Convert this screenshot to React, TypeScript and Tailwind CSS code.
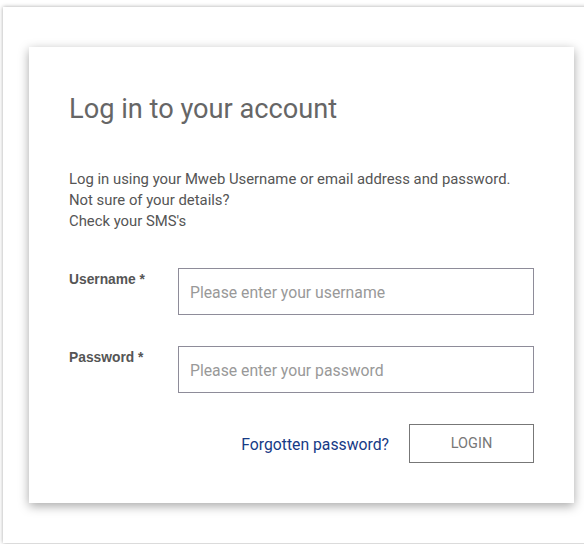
import React from 'react';

export default function App() {
  return (
    <div className="min-h-[544px] w-[584px] overflow-hidden bg-white font-['Roboto',sans-serif]">
      <div className="ml-[3px] mt-[7px] h-[536px] w-[620px] bg-white pl-[26px] pt-[40px] shadow-[0_0_4px_rgba(0,0,0,0.35)]">
        <div className="w-[545px] bg-white px-[40px] pb-[40px] pt-[46px] shadow-[0_3px_10px_rgba(0,0,0,0.35)]">
          <h1 className="text-[27.2px] leading-[32px] text-[#666]">Log in to your account</h1>

          <div className="mt-[44px] text-[14.85px] leading-[21px] text-[#555]">
            <p>Log in using your Mweb Username or email address and password.</p>
            <p>Not sure of your details?</p>
            <p>Check your SMS's</p>
          </div>

          <div className="mt-[36px] flex flex-col gap-[31px]">
            <div className="flex">
              <label className="w-[109px] pt-[2px] font-['Liberation_Sans',sans-serif] text-[13.8px] font-bold text-[#555]">Username *</label>
              <input
                className="h-[47px] w-[356px] border border-[#8e8c99] px-[11px] pt-[2px] text-[15.75px] text-[#555] outline-none placeholder:text-[#999]"
                placeholder="Please enter your username"
              />
            </div>
            <div className="flex">
              <label className="w-[109px] pt-[2px] font-['Liberation_Sans',sans-serif] text-[13.8px] font-bold text-[#555]">Password *</label>
              <input
                type="password"
                className="h-[47px] w-[356px] border border-[#8e8c99] px-[11px] pt-[2px] text-[15.75px] text-[#555] outline-none placeholder:text-[#999]"
                placeholder="Please enter your password"
              />
            </div>
            <div className="flex items-center justify-end gap-[20px]">
              <a href="#" className="pt-[2px] text-[15.75px] text-[#163a86]">Forgotten password?</a>
              <button className="h-[39px] w-[125px] border border-[#777] text-[14.5px] text-[#777]">LOGIN</button>
            </div>
          </div>
        </div>
      </div>
    </div>
  );
}
